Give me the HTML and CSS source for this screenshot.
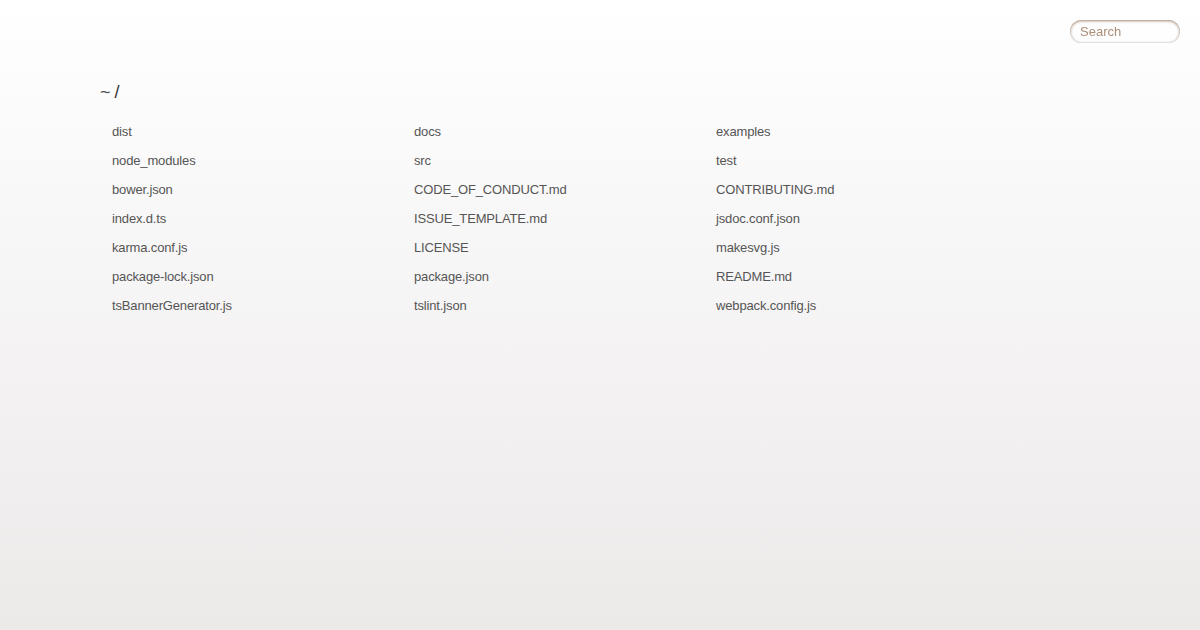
FILE: index.html
```html
<!DOCTYPE html>
<html>
<head>
<meta charset="utf-8">
<title>listing directory /</title>
<link rel="stylesheet" href="styles.css">
</head>
<body class="directory">
<input class="search" type="text" placeholder="Search" autocomplete="off">
<div class="wrapper">
  <h1 class="title"><a href="/">~</a> / </h1>
  <ul class="files">
    <li><a href="/dist"><span class="name">dist</span></a></li>
    <li><a href="/docs"><span class="name">docs</span></a></li>
    <li><a href="/examples"><span class="name">examples</span></a></li>
    <li><a href="/node_modules"><span class="name">node_modules</span></a></li>
    <li><a href="/src"><span class="name">src</span></a></li>
    <li><a href="/test"><span class="name">test</span></a></li>
    <li><a href="/bower.json"><span class="name">bower.json</span></a></li>
    <li><a href="/CODE_OF_CONDUCT.md"><span class="name">CODE_OF_CONDUCT.md</span></a></li>
    <li><a href="/CONTRIBUTING.md"><span class="name">CONTRIBUTING.md</span></a></li>
    <li><a href="/index.d.ts"><span class="name">index.d.ts</span></a></li>
    <li><a href="/ISSUE_TEMPLATE.md"><span class="name">ISSUE_TEMPLATE.md</span></a></li>
    <li><a href="/jsdoc.conf.json"><span class="name">jsdoc.conf.json</span></a></li>
    <li><a href="/karma.conf.js"><span class="name">karma.conf.js</span></a></li>
    <li><a href="/LICENSE"><span class="name">LICENSE</span></a></li>
    <li><a href="/makesvg.js"><span class="name">makesvg.js</span></a></li>
    <li><a href="/package-lock.json"><span class="name">package-lock.json</span></a></li>
    <li><a href="/package.json"><span class="name">package.json</span></a></li>
    <li><a href="/README.md"><span class="name">README.md</span></a></li>
    <li><a href="/tsBannerGenerator.js"><span class="name">tsBannerGenerator.js</span></a></li>
    <li><a href="/tslint.json"><span class="name">tslint.json</span></a></li>
    <li><a href="/webpack.config.js"><span class="name">webpack.config.js</span></a></li>
  </ul>
</div>
</body>
</html>
```

FILE: styles.css
```css
* {
  margin: 0;
  padding: 0;
  outline: 0;
  box-sizing: content-box;
}
html {
  min-height: 100%;
  background: #ECE9E9;
}
body {
  padding: 80px 100px;
  font: 13px "Liberation Sans", Arial, sans-serif;
  letter-spacing: -0.15px;
  background: #ECE9E9 linear-gradient(to bottom, #fff, #ECE9E9) no-repeat;
  min-height: 470px;
  color: #555;
}
a {
  color: #555;
  text-decoration: none;
}
.title {
  font-size: 18px;
  font-weight: normal;
  letter-spacing: -0.5px;
  color: #343434;
  padding-top: 2px;
  margin-bottom: 14px;
}
.title a {
  color: #555;
}
.files {
  list-style: none;
  display: flex;
  flex-wrap: wrap;
  width: 100%;
}
.files li {
  width: 30%;
  line-height: 25px;
  margin: 1px;
}
.files li a {
  display: block;
  height: 25px;
  border: 1px solid transparent;
  border-radius: 5px;
  overflow: hidden;
  white-space: nowrap;
}
.files .name {
  display: inline-block;
  width: 100%;
  overflow: hidden;
  text-overflow: ellipsis;
  text-indent: 10px;
}
.search {
  display: block;
  position: fixed;
  top: 20px;
  right: 20px;
  width: 90px;
  border-radius: 32px;
  box-shadow: inset 0 0 3px rgba(0,0,0,0.25), inset 0 1px 3px rgba(110,50,0,0.7), 0 1px 0 rgba(255,255,255,0.03);
  font: 13px "Liberation Sans", Arial, sans-serif;
  padding: 4px 10px;
  border: none;
  background: transparent;
  opacity: 0.7;
  color: #888;
}
.search::placeholder {
  color: #8a6040;
  opacity: 1;
}
```
